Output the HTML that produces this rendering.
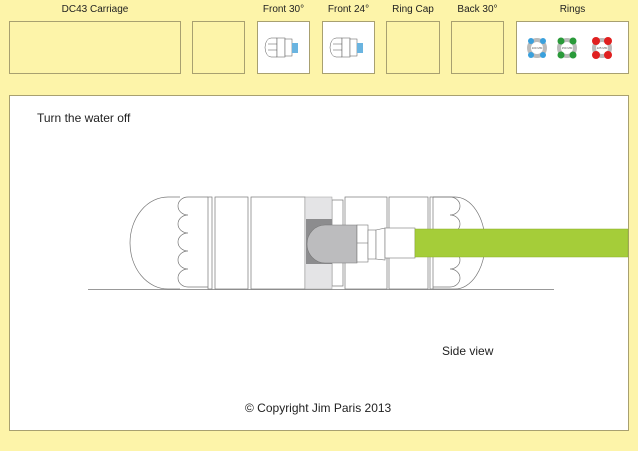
<!DOCTYPE html>
<html><head><style>
body{margin:0;width:638px;height:451px;background:#fdf4a9;font-family:"Liberation Sans",sans-serif;position:relative;overflow:hidden}
.l{position:absolute;top:4px;font-size:10px;color:#222;text-align:center}
.b{position:absolute;top:21px;height:53px;border:1px solid #a8a070;box-sizing:border-box;background:#fdf4a9}
.w{background:#fff}
</style></head><body>
<div class="l" style="left:9px;width:172px">DC43 Carriage</div>
<div class="l" style="left:257px;width:53px">Front 30°</div>
<div class="l" style="left:322px;width:53px">Front 24°</div>
<div class="l" style="left:386px;width:54px">Ring Cap</div>
<div class="l" style="left:451px;width:53px">Back 30°</div>
<div class="l" style="left:516px;width:113px">Rings</div>
<div class="b" style="left:9px;width:172px"></div>
<div class="b" style="left:192px;width:53px"></div>
<div class="b w" style="left:257px;width:53px">
<svg width="53" height="53" style="position:absolute;left:-1px;top:-1px"><g fill="#fff" stroke="#555" stroke-width=".5"><path d="M14 17h6v19h-6a6 9.5 0 0 1 0-19z"/><rect x="20" y="17" width="8" height="19"/><rect x="28" y="18" width="7" height="17"/><path d="M11 23h9M11 29h9"/></g><rect x="35" y="22" width="6" height="10" fill="#6ab4e0"/></svg></div>
<div class="b w" style="left:322px;width:53px">
<svg width="53" height="53" style="position:absolute;left:-1px;top:-1px"><g fill="#fff" stroke="#555" stroke-width=".5"><path d="M14 17h6v19h-6a6 9.5 0 0 1 0-19z"/><rect x="20" y="17" width="8" height="19"/><rect x="28" y="18" width="7" height="17"/><path d="M11 23h9M11 29h9"/></g><rect x="35" y="22" width="6" height="10" fill="#6ab4e0"/></svg></div>
<div class="b" style="left:386px;width:54px"></div>
<div class="b" style="left:451px;width:53px"></div>
<div class="b w" style="left:516px;width:113px">
<svg width="113" height="53" style="position:absolute;left:-1px;top:-1px">
<g stroke-width="4" fill="#fff"><circle cx="21" cy="27" r="8" stroke="#bbb"/><circle cx="51" cy="27" r="8" stroke="#bbb"/><circle cx="86" cy="27" r="8" stroke="#bbb"/></g>
<g fill="#3aa0dc"><circle cx="15" cy="20" r="3"/><circle cx="27" cy="20" r="3"/><circle cx="15" cy="34" r="3"/><circle cx="27" cy="34" r="3"/></g>
<g fill="#2a9a3a"><circle cx="45" cy="20" r="3.5"/><circle cx="57" cy="20" r="3.5"/><circle cx="45" cy="34" r="3.5"/><circle cx="57" cy="34" r="3.5"/></g>
<g fill="#e02020"><circle cx="80" cy="20" r="4"/><circle cx="92" cy="20" r="4"/><circle cx="80" cy="34" r="4"/><circle cx="92" cy="34" r="4"/></g>
<g font-size="3" fill="#555" text-anchor="middle"><text x="21" y="28">100 MM</text><text x="51" y="28">150 MM</text><text x="86" y="28">225 MM</text></g></svg></div>
<div style="position:absolute;left:9px;top:95px;width:620px;height:336px;background:#fff;border:1px solid #a8a070;box-sizing:border-box"></div>
<div style="position:absolute;left:37px;top:111px;font-size:12px;color:#222">Turn the water off</div>
<div style="position:absolute;left:442px;top:344px;font-size:12px;color:#222">Side view</div>
<div style="position:absolute;left:245px;top:401px;font-size:12px;color:#222">© Copyright Jim Paris 2013</div>
<svg width="638" height="451" style="position:absolute;left:0;top:0">
<g fill="none" stroke="#777" stroke-width=".7">
<path d="M180 197h-12a38 46 0 0 0 0 92h12"/>
<path d="M208 197h-20a10 9 0 0 0 0 18a10 9 0 0 0 0 18a10 9 0 0 0 0 18a10 9 0 0 0 0 18a10 9 0 0 0 0 18h20"/>
<path d="M433 197h22a30 46 0 0 1 0 92h-22"/>
<path d="M433 197h17a10 9 0 0 1 0 18a10 9 0 0 1 0 18a10 9 0 0 1 0 18a10 9 0 0 1 0 18a10 9 0 0 1 0 18h-17"/>
<rect x="208" y="197" width="4" height="92"/>
<rect x="215" y="197" width="33" height="92"/>
<rect x="251" y="197" width="54" height="92"/>
<rect x="332" y="200" width="11" height="86"/>
<rect x="345" y="197" width="42" height="92"/>
<rect x="389" y="197" width="39" height="92"/>
<rect x="430" y="197" width="3" height="92"/>
</g>
<rect x="305" y="197" width="27" height="92" fill="#e4e4e6" stroke="#999" stroke-width=".5"/>
<rect x="306" y="219" width="26" height="45" fill="#8c8c8e"/>
<path d="M357 225h-32a18 19 0 0 0 0 38h32z" fill="#bcbcbe" stroke="#777" stroke-width=".6"/>
<g fill="#fff" stroke="#777" stroke-width=".6"><rect x="357" y="225" width="11" height="37"/><path d="M357 243h11"/><rect x="368" y="230" width="8" height="29"/><path d="M376 230l9-2v32l-9-1z"/><rect x="385" y="228" width="30" height="30"/></g>
<rect x="415" y="229" width="213" height="28" fill="#a5cd39" stroke="#8aae2a" stroke-width=".5"/>
<path d="M88 289.5h466" stroke="#777" stroke-width=".8"/>
</svg>
</body></html>
